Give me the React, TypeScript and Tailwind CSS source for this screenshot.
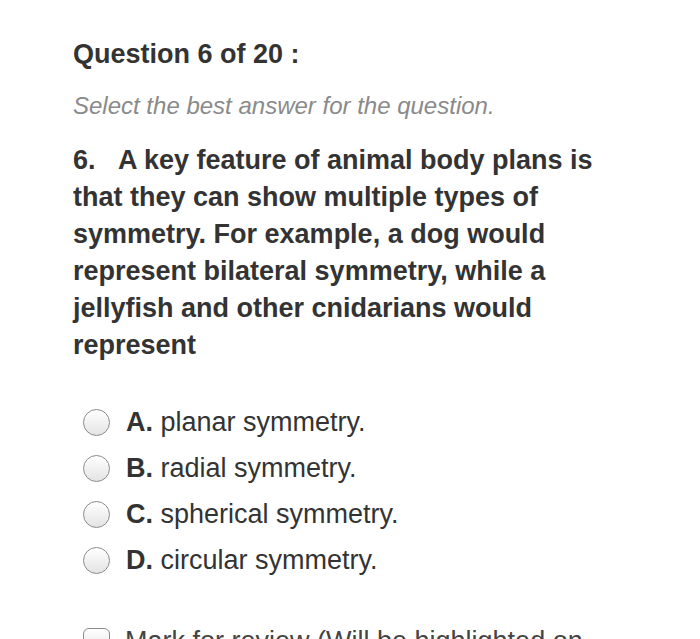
import React from 'react';

const options = [
  { key: 'A', text: 'planar symmetry.' },
  { key: 'B', text: 'radial symmetry.' },
  { key: 'C', text: 'spherical symmetry.' },
  { key: 'D', text: 'circular symmetry.' },
];

const Radio: React.FC = () => (
  <span className="inline-block w-[27px] h-[27px] shrink-0 rounded-full border-[1.5px] border-[#8a8a8a] bg-gradient-to-b from-white to-[#e4e4e4] shadow-[inset_0_1px_1px_rgba(255,255,255,0.9)]" />
);

const App: React.FC = () => (
  <div className="min-h-screen bg-white text-[#333] font-['Liberation_Sans',Arial,sans-serif] pl-[73px] pr-6 pt-[38px]">
    <h1 className="text-[27px] leading-[32px] font-bold">Question 6 of 20 :</h1>
    <p className="mt-[22px] text-[24px] leading-[28px] italic text-[#8a8a8a]">
      Select the best answer for the question.
    </p>
    <p className="mt-[22px] text-[27px] leading-[37px] font-bold pr-[70px]">
      <span className="inline-block w-[45px]">6.</span>A key feature of animal body plans is that they can show
      multiple types of symmetry. For example, a dog would represent bilateral symmetry, while a jellyfish and
      other cnidarians would represent
    </p>
    <ul className="mt-[42px] flex flex-col gap-[14px] pl-[10px]">
      {options.map((o) => (
        <li key={o.key} className="flex items-center gap-[16px] text-[27px] leading-[32px]">
          <Radio />
          <span>
            <span className="font-bold">{o.key}.</span> {o.text}
          </span>
        </li>
      ))}
    </ul>
    <div className="mt-[52px] flex items-start gap-[15px] pl-[10px] text-[27px] leading-[27px] text-[#444]">
      <span className="inline-block w-[27px] h-[26px] shrink-0 rounded-[6px] border-[1.5px] border-[#8a8a8a] bg-gradient-to-b from-white to-[#e4e4e4]" />
      <span className="max-w-[480px]">Mark for review (Will be highlighted on the review page)</span>
    </div>
  </div>
);

export default App;
